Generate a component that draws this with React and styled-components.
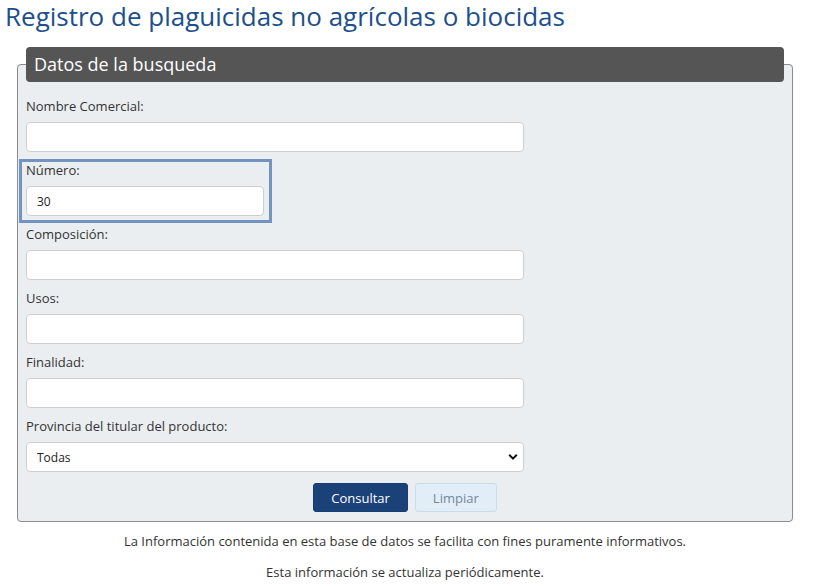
import React from "react";
import styled, { createGlobalStyle } from "styled-components";

const Global = createGlobalStyle`
  html, body { margin: 0; padding: 0; background: #fff; }
  body { font-family: "Open Sans", "Noto Sans", sans-serif; color: #333; }
`;

const Page = styled.div`
  width: 810px;
  padding-top: 1px;
`;

const Title = styled.h1`
  margin: 0 0 16px 5px;
  font-size: 26px;
  line-height: 30px;
  font-weight: 400;
  color: #1d4f8c;
`;

const Fieldset = styled.fieldset`
  margin: 0 17px;
  padding: 0 8px 9px 8px;
  border: 1px solid #8c8c8c;
  border-radius: 4px;
  background: #ebeef1;
  min-width: 0;
`;

const Legend = styled.legend`
  box-sizing: border-box;
  width: 100%;
  height: 35px;
  padding: 0 8px;
  background: #555555;
  color: #fff;
  border-radius: 4px;
  font-size: 18px;
  line-height: 35px;
  margin-bottom: 14px;
`;

const Group = styled.div`
  position: relative;
  width: ${(p) => p.$width}px;
  margin-bottom: 8px;
  ${(p) =>
    p.$focused &&
    `
    &::after {
      content: "";
      position: absolute;
      left: -7px;
      right: -8px;
      top: -1px;
      bottom: -7px;
      border: 3px solid #7394bf;
      pointer-events: none;
    }
  `}
`;

const Label = styled.label`
  display: block;
  font-size: 13px;
  line-height: 20px;
  color: #333;
  margin-bottom: 6px;
`;

const Input = styled.input`
  box-sizing: border-box;
  display: block;
  width: 100%;
  height: 30px;
  margin: 0;
  padding: 0 10px;
  border: 1px solid #cfcfcf;
  border-radius: 4px;
  background: #fff;
  font-family: "Open Sans", "Noto Sans", sans-serif;
  font-size: 12px;
  color: #222;
  outline: none;
`;

const SelectWrap = styled.div`
  position: relative;
  width: 100%;
`;

const Select = styled.select`
  box-sizing: border-box;
  display: block;
  width: 100%;
  height: 30px;
  margin: 0;
  padding: 0 10px;
  border: 1px solid #cfcfcf;
  border-radius: 4px;
  background: #fff;
  font-family: "Open Sans", "Noto Sans", sans-serif;
  font-size: 12px;
  color: #222;
  appearance: none;
  outline: none;
`;

const Chevron = styled.svg`
  position: absolute;
  right: 6px;
  top: 11px;
  width: 10px;
  height: 8px;
  pointer-events: none;
`;

const Buttons = styled.div`
  display: flex;
  justify-content: center;
  gap: 7px;
  margin-top: 11px;
`;

const Button = styled.button`
  box-sizing: border-box;
  height: 29px;
  padding: 0 17px;
  border-radius: 3px;
  font-family: "Open Sans", "Noto Sans", sans-serif;
  font-size: 13px;
  cursor: pointer;
  border: 1px solid ${(p) => (p.$primary ? "#193d70" : "#c8dceb")};
  background: ${(p) => (p.$primary ? "#1a4178" : "#e2eef7")};
  color: ${(p) => (p.$primary ? "#fff" : "#74889a")};
`;

const Footer = styled.div`
  text-align: center;
  font-size: 13px;
  color: #333;
  padding-top: 10px;
`;

const FooterLine = styled.p`
  margin: 0 0 13px;
  line-height: 18px;
`;

const fields = [
  { label: "Nombre Comercial:", value: "", width: 498 },
  { label: "Número:", value: "30", width: 238, focused: true },
  { label: "Composición:", value: "", width: 498 },
  { label: "Usos:", value: "", width: 498 },
  { label: "Finalidad:", value: "", width: 498 },
];

export default function App() {
  return (
    <Page>
      <Global />
      <Title>Registro de plaguicidas no agrícolas o biocidas</Title>
      <Fieldset>
        <Legend>Datos de la busqueda</Legend>
        {fields.map((f) => (
          <Group key={f.label} $width={f.width} $focused={f.focused}>
            <Label>{f.label}</Label>
            <Input defaultValue={f.value} />
          </Group>
        ))}
        <Group $width={498}>
          <Label>Provincia del titular del producto:</Label>
          <SelectWrap>
            <Select defaultValue="Todas">
              <option>Todas</option>
            </Select>
            <Chevron viewBox="0 0 10 8">
              <path d="M1.2 1.8 L5 5.6 L8.8 1.8" fill="none" stroke="#111" strokeWidth="2" />
            </Chevron>
          </SelectWrap>
        </Group>
        <Buttons>
          <Button $primary>Consultar</Button>
          <Button>Limpiar</Button>
        </Buttons>
      </Fieldset>
      <Footer>
        <FooterLine>
          La Información contenida en esta base de datos se facilita con fines puramente informativos.
        </FooterLine>
        <FooterLine>Esta información se actualiza periódicamente.</FooterLine>
      </Footer>
    </Page>
  );
}
